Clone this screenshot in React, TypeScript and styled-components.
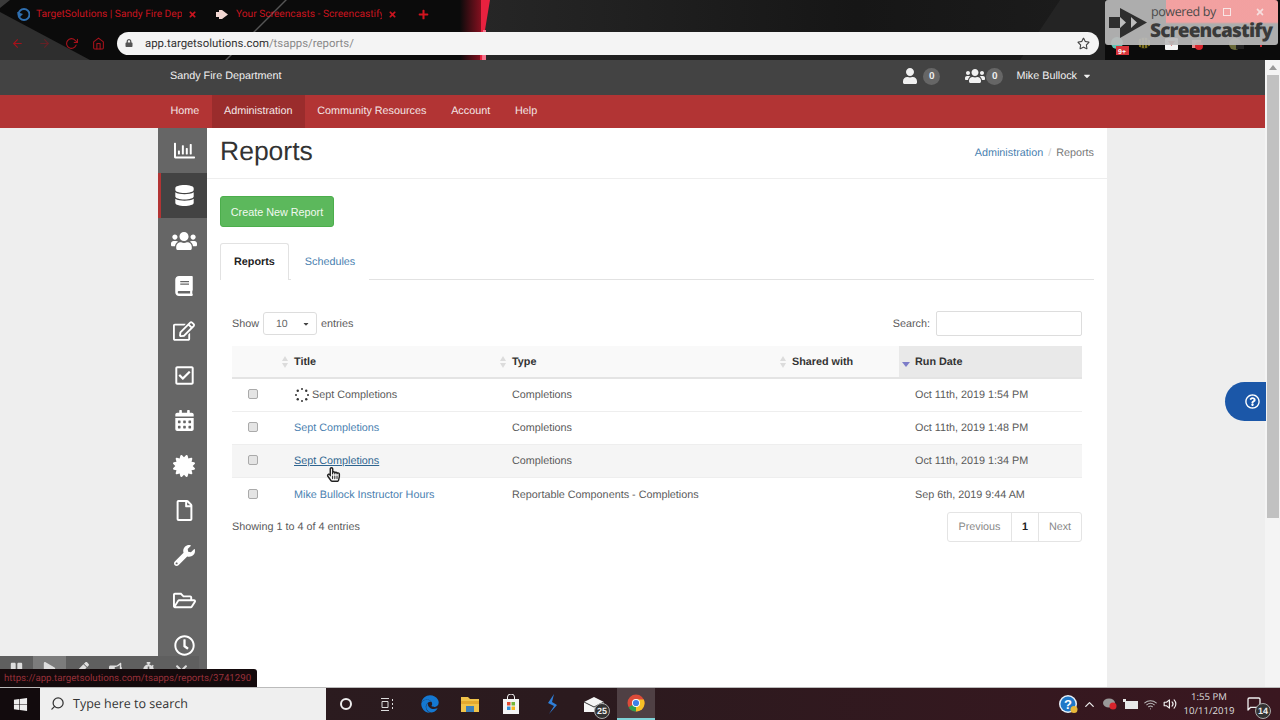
import React from "react";
import styled, { createGlobalStyle } from "styled-components";
import {
  FaBook,
  FaBullhorn,
  FaCalendarAlt,
  FaCaretDown,
  FaCertificate,
  FaChevronDown,
  FaDatabase,
  FaEdge,
  FaLock,
  FaPause,
  FaPen,
  FaPlay,
  FaPlus,
  FaRegChartBar,
  FaRegCheckSquare,
  FaRegClock,
  FaRegEdit,
  FaRegFile,
  FaRegFolderOpen,
  FaRegHandPointer,
  FaRegQuestionCircle,
  FaRegStar,
  FaStopwatch,
  FaTimes,
  FaUser,
  FaUsers,
  FaWindows,
  FaWrench,
} from "react-icons/fa";
import {
  FiArrowLeft,
  FiArrowRight,
  FiChevronUp,
  FiHome,
  FiMessageSquare,
  FiRotateCw,
  FiSearch,
  FiVolume2,
  FiWifi,
} from "react-icons/fi";

const Global = createGlobalStyle`
  html, body { margin: 0; padding: 0; background: #fff; }
  body {
    font-family: "Liberation Sans", Arial, sans-serif;
    font-size: 10.8px;
    color: #333;
    overflow: hidden;
    text-rendering: geometricPrecision;
  }
  * { box-sizing: border-box; }
`;

const Screen = styled.div`
  position: relative;
  width: 1280px;
  height: 720px;
  display: flex;
  flex-direction: column;
  overflow: hidden;
`;

/* browser chrome */
const Chrome = styled.div`
  position: relative;
  height: 60px;
  flex: none;
  background: #0b0b0b;
`;
const ChromeArt = styled.svg`
  position: absolute;
  inset: 0;
`;
const TabRow = styled.div`
  position: relative;
  height: 30px;
  display: flex;
  align-items: center;
  padding: 0 0 2px 17px;
`;
const Tab = styled.div<{ $w: number }>`
  width: ${(p) => p.$w}px;
  display: flex;
  align-items: center;
  gap: 6px;
  font-family: Roboto, sans-serif;
  font-size: 10.2px;
  color: #c9141f;
  white-space: nowrap;
`;
const TabTitle = styled.span`
  width: 146px;
  overflow: hidden;
`;
const NewTab = styled.div`
  color: #d2141f;
  font-size: 11px;
  display: flex;
  margin-left: 2px;
`;
const ToolRow = styled.div`
  position: relative;
  display: flex;
  align-items: center;
  height: 26px;
  padding-left: 11px;
`;
const NavIcons = styled.div`
  width: 106px;
  display: flex;
  align-items: center;
  gap: 14px;
  color: #a5121b;
  font-size: 13px;
`;
const FadedArrow = styled(FiArrowRight)`
  opacity: 0.45;
`;
const Omnibox = styled.div`
  width: 982px;
  height: 23px;
  background: #f4f4f4;
  border-radius: 12px;
  display: flex;
  align-items: center;
  padding: 0 9px 0 8px;
  font-family: Roboto, sans-serif;
  font-size: 11.4px;
  color: #333;
`;
const LockIcon = styled(FaLock)`
  font-size: 8px;
  color: #555;
  margin: 0 12px 0 0;
`;
const UrlPath = styled.span`
  color: #8a8a8a;
`;
const StarIcon = styled(FaRegStar)`
  margin-left: auto;
  font-size: 13px;
  color: #444;
`;
const CastifyBadge = styled.div`
  position: absolute;
  top: 0;
  left: 1105px;
  width: 173px;
  height: 45px;
  background: linear-gradient(rgba(246, 160, 160, 0.95) 0 22px, transparent 24px) 61px 0 / 112px 100% no-repeat,
    rgba(186, 186, 186, 0.93);
  border-radius: 3px;
  color: #333;
`;
const CastifyLogo = styled.svg`
  position: absolute;
  left: 4px;
  top: 7px;
`;
const CastifySmall = styled.div`
  position: absolute;
  left: 46px;
  top: 3px;
  font-family: "Open Sans", sans-serif;
  font-size: 12.5px;
  letter-spacing: -0.4px;
  color: #4a4a4a;
`;
const CastifyName = styled.div`
  position: absolute;
  left: 45px;
  top: 17px;
  font-family: "Open Sans", sans-serif;
  font-weight: 800;
  font-size: 19px;
  letter-spacing: -0.8px;
  line-height: 26px;
  color: #3a3a3a;
`;
const CastifyRestore = styled.span`
  position: absolute;
  left: 118px;
  top: 8px;
  width: 8px;
  height: 8px;
  border: 1px solid #f8e6e6;
`;
const CastifyClose = styled(FaTimes)`
  position: absolute;
  left: 150px;
  top: 7px;
  font-size: 10px;
  color: #f6dede;
`;
const ExtIcons = styled.svg`
  position: absolute;
  left: 1105px;
  top: 34px;
`;

/* page */
const PageRow = styled.div`
  flex: 1;
  min-height: 0;
  display: flex;
`;
const Page = styled.div`
  flex: 1;
  min-width: 0;
  display: flex;
  flex-direction: column;
  background: #eee;
`;
const TopBar = styled.div`
  height: 35px;
  flex: none;
  background: #434343;
  color: #f0f0f0;
  display: flex;
  align-items: center;
  padding: 0 173px 3px 170px;
`;
const TopRight = styled.div`
  margin-left: auto;
  display: flex;
  align-items: center;
`;
const TopIcon = styled.span<{ $size: number; $left: number; $right: number }>`
  display: flex;
  font-size: ${(p) => p.$size}px;
  margin: 0 ${(p) => p.$right}px 0 ${(p) => p.$left}px;
`;
const CountBadge = styled.span`
  width: 17px;
  height: 17px;
  border-radius: 50%;
  background: #666;
  color: #eee;
  font-size: 10px;
  font-weight: 700;
  display: flex;
  align-items: center;
  justify-content: center;
`;
const UserName = styled.span`
  margin-left: 13px;
`;
const UserCaret = styled(FaCaretDown)`
  margin-left: 5px;
  font-size: 10px;
`;
const NavBar = styled.nav`
  height: 33px;
  flex: none;
  background: #b23434;
  display: flex;
  padding-left: 158px;
`;
const NavItem = styled.a<{ $active?: boolean }>`
  display: flex;
  align-items: center;
  padding: 0 12.4px 2px;
  color: #f4e6e6;
  background: ${(p) => (p.$active ? "#9a2c2c" : "transparent")};
`;
const Body = styled.div`
  flex: 1;
  min-height: 0;
  display: flex;
  padding: 0 158px;
`;
const Sidebar = styled.aside`
  width: 49px;
  flex: none;
  background: #666;
  display: flex;
  flex-direction: column;
`;
const SideItem = styled.div<{ $active?: boolean; $size: number }>`
  height: 45px;
  flex: none;
  display: flex;
  align-items: center;
  justify-content: center;
  color: #fff;
  font-size: ${(p) => p.$size}px;
  background: ${(p) => (p.$active ? "#434343" : "transparent")};
  border-left: 3px solid ${(p) => (p.$active ? "#b23434" : "transparent")};
`;
const Content = styled.main`
  position: relative;
  flex: 1;
  min-width: 0;
  background: #fff;
`;
const PageHead = styled.header`
  height: 51px;
  display: flex;
  align-items: center;
  justify-content: space-between;
  padding: 0 13px 4px 13px;
  border-bottom: 1px solid #eee;
`;
const H1 = styled.h1`
  margin: 0;
  font-size: 26.5px;
  font-weight: 400;
  color: #333;
`;
const Crumbs = styled.div`
  display: flex;
  gap: 5px;
  margin-top: 4px;
  color: #777;
`;
const CrumbLink = styled.a`
  color: #4a7fb0;
`;
const Sep = styled.span`
  color: #ccc;
`;
const Inner = styled.div`
  padding: 17px 13px 0;
`;
const GreenButton = styled.button`
  display: block;
  width: 114px;
  height: 31px;
  padding: 0;
  border: 1px solid #4cae4c;
  border-radius: 3px;
  background: #5cb85c;
  color: #f2f8f0;
  font: 10.8px "Liberation Sans", Arial, sans-serif;
`;
const Tabs = styled.div`
  display: flex;
  margin-top: 16px;
  height: 37px;
  border-bottom: 1px solid #e2e2e2;
`;
const TabLink = styled.a<{ $active?: boolean }>`
  height: 37px;
  display: flex;
  align-items: center;
  padding: 0 13px;
  color: ${(p) => (p.$active ? "#222" : "#4a7fb0")};
  font-weight: ${(p) => (p.$active ? 700 : 400)};
  background: #fff;
  border: 1px solid ${(p) => (p.$active ? "#e2e2e2" : "transparent")};
  border-bottom: none;
  border-radius: 3px 3px 0 0;
  margin-right: 2px;
`;
const TableBox = styled.div`
  padding: 31px 12px 0;
  color: #5a5a5a;
`;
const Controls = styled.div`
  height: 25px;
  display: flex;
  align-items: center;
  justify-content: space-between;
`;
const ControlSide = styled.div`
  display: flex;
  align-items: center;
  gap: 4px;
`;
const FakeSelect = styled.div`
  width: 54px;
  height: 23px;
  border: 1px solid #ddd;
  border-radius: 3px;
  display: flex;
  align-items: center;
  justify-content: space-between;
  padding: 0 6px 0 12px;
  font-size: 10.5px;
  color: #666;
`;
const SelectCaret = styled(FaCaretDown)`
  font-size: 8px;
  color: #444;
`;
const SearchBox = styled.div`
  width: 146px;
  height: 25px;
  margin-left: 2px;
  border: 1px solid #ddd;
  border-radius: 2px;
`;
const Table = styled.table`
  width: 850px;
  margin-top: 10px;
  border-collapse: collapse;
  table-layout: fixed;
  tbody tr:last-child td {
    border-bottom: none;
  }
`;
const Th = styled.th<{ $w: number; $sorted?: boolean }>`
  position: relative;
  width: ${(p) => p.$w}px;
  height: 32px;
  padding: 0 0 0 16px;
  text-align: left;
  font-weight: 700;
  color: #333;
  background: ${(p) => (p.$sorted ? "#e9e9e9" : "#f9f9f9")};
  border-bottom: 2px solid #e4e4e4;
`;
const SortMark = styled.svg`
  position: absolute;
  left: 3px;
  top: 10px;
`;
const Row = styled.tr<{ $hover?: boolean }>`
  background: ${(p) => (p.$hover ? "#f5f5f5" : "#fff")};
`;
const Td = styled.td`
  height: 33.3px;
  padding: 0 0 0 16px;
  border-bottom: 1px solid #eee;
  color: #5a5a5a;
  white-space: nowrap;
`;
const BoxCell = styled.td`
  height: 33.3px;
  padding: 0 0 2px 16px;
  border-bottom: 1px solid #eee;
`;
const Check = styled.span`
  display: block;
  width: 10px;
  height: 10px;
  border: 1px solid #aaa;
  border-radius: 2px;
  background: #e4e4e4;
`;
const RowLink = styled.a<{ $hover?: boolean }>`
  color: ${(p) => (p.$hover ? "#2f6590" : "#4a7fb0")};
  text-decoration: ${(p) => (p.$hover ? "underline" : "none")};
`;
const Running = styled.span`
  display: flex;
  align-items: center;
  gap: 2px;
`;
const Footer = styled.div`
  display: flex;
  justify-content: space-between;
  align-items: center;
  margin-top: 1px;
`;
const Pager = styled.div`
  height: 30px;
  display: flex;
  border: 1px solid #e4e4e4;
  border-radius: 3px;
`;
const PageCell = styled.span<{ $w: number; $current?: boolean }>`
  width: ${(p) => p.$w}px;
  display: flex;
  align-items: center;
  justify-content: center;
  color: ${(p) => (p.$current ? "#222" : "#888")};
  font-weight: ${(p) => (p.$current ? 700 : 400)};
  & + & {
    border-left: 1px solid #e4e4e4;
  }
`;
const HandCursor = styled(FaRegHandPointer)`
  position: absolute;
  left: 119px;
  top: 339px;
  font-size: 15px;
  color: #222;
`;
const Scrollbar = styled.div`
  position: relative;
  width: 15px;
  flex: none;
  background: #f4f4f4;
  padding: 15px 1px 0 2px;
`;
const ScrollArrow = styled.span`
  position: absolute;
  top: 5px;
  left: 4px;
  width: 0;
  height: 0;
  border: 4px solid transparent;
  border-top: none;
  border-bottom: 5px solid #999;
`;
const ScrollThumb = styled.div`
  height: 443px;
  background: #c1c1c1;
`;
const HelpTab = styled.div`
  position: absolute;
  left: 1225px;
  top: 382px;
  width: 41px;
  height: 39px;
  border-radius: 20px 0 0 20px;
  background: #1b57a8;
  color: #fff;
  display: flex;
  align-items: center;
  justify-content: center;
  font-size: 15px;
  padding-left: 13px;
`;
const RecorderBar = styled.div`
  position: absolute;
  left: 0;
  top: 656px;
  width: 199px;
  height: 31px;
  background: #5f5f5f;
  display: flex;
  color: #ddd;
  font-size: 13px;
`;
const RecorderBtn = styled.span<{ $on?: boolean }>`
  width: 33px;
  height: 100%;
  background: ${(p) => (p.$on ? "#7c7c7c" : "transparent")};
  display: flex;
  justify-content: center;
  padding-top: 6px;
`;
const LinkHint = styled.div`
  position: absolute;
  left: 0;
  top: 669px;
  width: 257px;
  height: 18px;
  padding-left: 4px;
  display: flex;
  align-items: center;
  background: #140a0c;
  color: #98303a;
  border-radius: 0 3px 0 0;
  font-family: Roboto, sans-serif;
  font-size: 9.7px;
  white-space: nowrap;
`;

/* windows taskbar */
const Taskbar = styled.footer`
  height: 33px;
  flex: none;
  display: flex;
  align-items: center;
  background: linear-gradient(90deg, #2b1c20 0, #2b1a1e 45%, #3a1720 100%);
  border-top: 1px solid #bbb;
  color: #eee;
`;
const StartBtn = styled.div`
  width: 40px;
  height: 100%;
  background: #120b0d;
  display: flex;
  align-items: center;
  justify-content: center;
  font-size: 15px;
`;
const SearchField = styled.div`
  width: 286px;
  height: 100%;
  background: #efefef;
  color: #333;
  display: flex;
  align-items: center;
  padding: 0 0 2px 10px;
  gap: 8px;
  font-family: "Open Sans", sans-serif;
  font-size: 12.5px;
`;
const FlippedSearch = styled(FiSearch)`
  transform: scaleX(-1);
`;
const TaskSlot = styled.div<{ $w: number; $active?: boolean }>`
  position: relative;
  width: ${(p) => p.$w}px;
  height: 100%;
  display: flex;
  align-items: center;
  justify-content: center;
  background: ${(p) => (p.$active ? "#4f4044" : "transparent")};
  border-bottom: ${(p) => (p.$active ? "2px solid #7fd3d8" : "none")};
`;
const Cortana = styled.span`
  width: 12px;
  height: 12px;
  border: 2px solid #eee;
  border-radius: 50%;
`;
const MiniBadge = styled.span<{ $right: number }>`
  position: absolute;
  right: ${(p) => p.$right}px;
  bottom: 1px;
  width: 16px;
  height: 16px;
  border-radius: 50%;
  background: #333;
  color: #eee;
  border: 1px solid #aaa;
  font-size: 9px;
  font-weight: 700;
  display: flex;
  align-items: center;
  justify-content: center;
`;
const Tray = styled.div`
  margin-left: auto;
  display: flex;
  align-items: center;
  height: 100%;
  font-size: 13px;
`;
const TrayIcon = styled.span<{ $w: number }>`
  width: ${(p) => p.$w}px;
  display: flex;
  justify-content: center;
`;
const Clock = styled.div`
  width: 58px;
  text-align: center;
  font-family: "Open Sans", sans-serif;
  font-size: 9.6px;
  line-height: 14px;
  color: #ddd;
`;
const Notify = styled.div`
  position: relative;
  width: 42px;
  height: 100%;
  display: flex;
  align-items: center;
  justify-content: center;
  padding-right: 10px;
  font-size: 16px;
`;

const sideIcons = [
  { Icon: FaRegChartBar, size: 21 },
  { Icon: FaDatabase, size: 21 },
  { Icon: FaUsers, size: 26 },
  { Icon: FaBook, size: 20 },
  { Icon: FaRegEdit, size: 22 },
  { Icon: FaRegCheckSquare, size: 21 },
  { Icon: FaCalendarAlt, size: 21 },
  { Icon: FaCertificate, size: 22 },
  { Icon: FaRegFile, size: 21 },
  { Icon: FaWrench, size: 21 },
  { Icon: FaRegFolderOpen, size: 23 },
  { Icon: FaRegClock, size: 21 },
];

const rows = [
  { title: "Sept Completions", type: "Completions", date: "Oct 11th, 2019 1:54 PM", running: true },
  { title: "Sept Completions", type: "Completions", date: "Oct 11th, 2019 1:48 PM" },
  { title: "Sept Completions", type: "Completions", date: "Oct 11th, 2019 1:34 PM", hover: true },
  { title: "Mike Bullock Instructor Hours", type: "Reportable Components - Completions", date: "Sep 6th, 2019 9:44 AM" },
];

const Sort = ({ sorted }: { sorted?: boolean }) => (
  <SortMark width="8" height="12" viewBox="0 0 8 12">
    {sorted ? (
      <path d="M0 6h8l-4 5z" fill="#7c7cc8" />
    ) : (
      <path d="M4 0l3 5H1zM4 12L1 7h6z" fill="#dcdcdc" />
    )}
  </SortMark>
);

const Spinner = () => (
  <svg width="16" height="16" viewBox="0 0 16 16">
    {[0, 45, 90, 135, 180, 225, 270, 315].map((a, i) => (
      <circle
        key={a}
        cx={8 + 6 * Math.sin((a * Math.PI) / 180)}
        cy={8 - 6 * Math.cos((a * Math.PI) / 180)}
        r={i % 2 ? 1.2 : 1}
        fill="#333"
      />
    ))}
  </svg>
);

const ChromeLogo = () => (
  <svg width="18" height="18" viewBox="0 0 18 18">
    <circle cx="9" cy="9" r="8.5" fill="#dd4b39" />
    <path d="M9 9L1.6 13.2A8.5 8.5 0 0 0 9 17.5z" fill="#2f9e4f" />
    <path d="M9 9v8.5A8.500 8.500 0 0 0 16.800 5.500H9z" fill="#f6c026" />
    <circle cx="9" cy="9" r="4" fill="#fff" />
    <circle cx="9" cy="9" r="3.1" fill="#3f80e8" />
  </svg>
);

const App: React.FC = () => {
  return (
    <Screen>
      <Global />
      <Chrome>
        <ChromeArt width="1280" height="60" viewBox="0 0 1280 60">
          <defs>
            <linearGradient id="glow" x1="0" x2="1" y1="0" y2="0">
              <stop offset="0" stopColor="#0b0b0b" />
              <stop offset="1" stopColor="#8a1020" />
            </linearGradient>
            <linearGradient id="rightSide" x1="0" x2="1" y1="0" y2="0">
              <stop offset="0" stopColor="#262626" />
              <stop offset="0.6" stopColor="#161616" />
              <stop offset="1" stopColor="#1c1c1c" />
            </linearGradient>
          </defs>
          <path d="M0 12L90 60H0z" fill="#2e2e2e" />
          <path d="M285 0L225 60h2L287 0z" fill="#555" />
          <rect x="460" y="0" width="22" height="60" fill="url(#glow)" />
          <rect x="484" y="0" width="620" height="60" fill="url(#rightSide)" />
          <path d="M1020 60l40-60h45v60z" fill="#242424" />
          <path d="M0 0h10L0 8z" fill="#3a3a3a" />
          <path d="M481 0h9l-5 30 1 30h-6l1-30z" fill="#e8213f" />
          <path d="M483 30h3v30h-4z" fill="#f4748c" />
        </ChromeArt>
        <TabRow>
          <Tab $w={198}>
            <svg width="13" height="13" viewBox="0 0 13 13">
              <circle cx="7" cy="6.5" r="5.5" fill="none" stroke="#2f6fb0" strokeWidth="2" />
              <path d="M0 4l6 2-4 4z" fill="#2f6fb0" />
            </svg>
            <TabTitle>TargetSolutions | Sandy Fire Department</TabTitle>
            <FaTimes size={9} />
          </Tab>
          <Tab $w={201}>
            <svg width="15" height="11" viewBox="0 0 13 11">
              <path d="M0 3h3V1h3l6 4.5L6 10H3V8H0z" fill="#f2d7d2" />
            </svg>
            <TabTitle>Your Screencasts - Screencastify</TabTitle>
            <FaTimes size={9} />
          </Tab>
          <NewTab>
            <FaPlus />
          </NewTab>
        </TabRow>
        <ToolRow>
          <NavIcons>
            <FiArrowLeft />
            <FadedArrow />
            <FiRotateCw />
            <FiHome />
          </NavIcons>
          <Omnibox>
            <LockIcon />
            app.targetsolutions.com<UrlPath>/tsapps/reports/</UrlPath>
            <StarIcon />
          </Omnibox>
        </ToolRow>
        <ExtIcons width="175" height="24" viewBox="0 0 175 24">
          <circle cx="12" cy="9" r="6" fill="#5fc4b4" />
          <rect x="11" y="12" width="13" height="9" fill="#d8343a" />
          <text x="13" y="19.500" fontSize="7" fontWeight="700" fill="#fff" fontFamily="Liberation Sans">9+</text>
          <circle cx="39" cy="9" r="6" fill="#2a2a10" />
          <path d="M35 5v8M38 4v10M41 4v10M44 6v6" stroke="#d4b82e" strokeWidth="1" />
          <rect x="60" y="4" width="13" height="12" rx="1" fill="#f4f4f4" />
          <path d="M63 7h7l-3.500 5z" fill="#c84a4a" />
          <rect x="87" y="6" width="9" height="8" fill="#e58a8a" />
          <circle cx="94" cy="12" r="4" fill="#d8242c" />
          <circle cx="130" cy="10" r="6" fill="#6b6b3a" />
          <rect x="131" y="9" width="8" height="6" fill="#222" />
          <rect x="155" y="11" width="2" height="2" fill="#c8242c" />
        </ExtIcons>
        <CastifyBadge>
          <CastifyLogo width="40" height="32" viewBox="0 0 40 32">
            <path d="M11 1l27 14.500L11 31z" fill="#2e2e2e" />
            <path d="M0 10h11v11H0z" fill="#2e2e2e" />
            <path d="M11 10l6 5.500-6 5.500zM22 10l6 5.500-6 5.500z" fill="#bdbdbd" />
          </CastifyLogo>
          <CastifySmall>powered by</CastifySmall>
          <CastifyName>Screencastify</CastifyName>
          <CastifyRestore />
          <CastifyClose />
        </CastifyBadge>
      </Chrome>

      <PageRow>
        <Page>
          <TopBar>
            Sandy Fire Department
            <TopRight>
              <TopIcon $size={16} $left={0} $right={5}>
                <FaUser />
              </TopIcon>
              <CountBadge>0</CountBadge>
              <TopIcon $size={20} $left={25} $right={1}>
                <FaUsers />
              </TopIcon>
              <CountBadge>0</CountBadge>
              <UserName>Mike Bullock</UserName>
              <UserCaret />
            </TopRight>
          </TopBar>
          <NavBar>
            <NavItem>Home</NavItem>
            <NavItem $active>Administration</NavItem>
            <NavItem>Community Resources</NavItem>
            <NavItem>Account</NavItem>
            <NavItem>Help</NavItem>
          </NavBar>
          <Body>
            <Sidebar>
              {sideIcons.map(({ Icon, size }, i) => (
                <SideItem key={i} $active={i === 1} $size={size}>
                  <Icon />
                </SideItem>
              ))}
            </Sidebar>
            <Content>
              <PageHead>
                <H1>Reports</H1>
                <Crumbs>
                  <CrumbLink>Administration</CrumbLink>
                  <Sep>/</Sep>
                  <span>Reports</span>
                </Crumbs>
              </PageHead>
              <Inner>
                <GreenButton>Create New Report</GreenButton>
                <Tabs>
                  <TabLink $active>Reports</TabLink>
                  <TabLink>Schedules</TabLink>
                </Tabs>
                <TableBox>
                  <Controls>
                    <ControlSide>
                      Show
                      <FakeSelect>
                        10
                        <SelectCaret />
                      </FakeSelect>
                      entries
                    </ControlSide>
                    <ControlSide>
                      Search:
                      <SearchBox />
                    </ControlSide>
                  </Controls>
                  <Table>
                    <thead>
                      <tr>
                        <Th $w={46} />
                        <Th $w={218}>
                          <Sort />
                          Title
                        </Th>
                        <Th $w={280}>
                          <Sort />
                          Type
                        </Th>
                        <Th $w={123}>
                          <Sort />
                          Shared with
                        </Th>
                        <Th $w={183} $sorted>
                          <Sort sorted />
                          Run Date
                        </Th>
                      </tr>
                    </thead>
                    <tbody>
                      {rows.map((r, i) => (
                        <Row key={i} $hover={r.hover}>
                          <BoxCell>
                            <Check />
                          </BoxCell>
                          <Td>
                            {r.running ? (
                              <Running>
                                <Spinner />
                                {r.title}
                              </Running>
                            ) : (
                              <RowLink $hover={r.hover}>{r.title}</RowLink>
                            )}
                          </Td>
                          <Td>{r.type}</Td>
                          <Td />
                          <Td>{r.date}</Td>
                        </Row>
                      ))}
                    </tbody>
                  </Table>
                  <Footer>
                    Showing 1 to 4 of 4 entries
                    <Pager>
                      <PageCell $w={63}>Previous</PageCell>
                      <PageCell $w={27} $current>
                        1
                      </PageCell>
                      <PageCell $w={43}>Next</PageCell>
                    </Pager>
                  </Footer>
                </TableBox>
              </Inner>
              <HandCursor />
            </Content>
          </Body>
        </Page>
        <Scrollbar>
          <ScrollArrow />
          <ScrollThumb />
        </Scrollbar>
      </PageRow>

      <HelpTab>
        <FaRegQuestionCircle />
      </HelpTab>
      <RecorderBar>
        <RecorderBtn>
          <FaPause />
        </RecorderBtn>
        <RecorderBtn $on>
          <FaPlay />
        </RecorderBtn>
        <RecorderBtn>
          <FaPen />
        </RecorderBtn>
        <RecorderBtn>
          <FaBullhorn />
        </RecorderBtn>
        <RecorderBtn>
          <FaStopwatch />
        </RecorderBtn>
        <RecorderBtn>
          <FaChevronDown />
        </RecorderBtn>
      </RecorderBar>
      <LinkHint>https://app.targetsolutions.com/tsapps/reports/3741290</LinkHint>

      <Taskbar>
        <StartBtn>
          <FaWindows />
        </StartBtn>
        <SearchField>
          <FlippedSearch size={15} />
          Type here to search
        </SearchField>
        <TaskSlot $w={40}>
          <Cortana />
        </TaskSlot>
        <TaskSlot $w={41}>
          <svg width="14" height="13" viewBox="0 0 14 13" fill="none" stroke="#ddd">
            <path d="M1 .5h8M2 3.500h6v6H2zM1 12.500h8M12.500 1v2M12.500 5v2M12.500 9v2" />
          </svg>
        </TaskSlot>
        <TaskSlot $w={45}>
          <FaEdge size={18} color="#1478d2" />
        </TaskSlot>
        <TaskSlot $w={36}>
          <svg width="18" height="16" viewBox="0 0 18 16">
            <path d="M0 1h7l2 2h9v13H0z" fill="#f0c34a" />
            <rect x="0" y="5" width="18" height="3" fill="#e3a92e" />
            <rect x="5" y="10" width="8" height="6" fill="#3b7fb8" />
          </svg>
        </TaskSlot>
        <TaskSlot $w={46}>
          <svg width="18" height="20" viewBox="0 0 18 20">
            <path d="M1 5h16v15H1z" fill="#f5f5f5" />
            <path d="M5.500 6V3a3.500 3 0 0 1 7 0v3" fill="none" stroke="#f5f5f5" />
            <rect x="5" y="8" width="3.500" height="3.500" fill="#e2492f" />
            <rect x="9.500" y="8" width="3.500" height="3.500" fill="#72b53a" />
            <rect x="5" y="12.500" width="3.500" height="3.500" fill="#2f8ed8" />
            <rect x="9.500" y="12.500" width="3.500" height="3.500" fill="#f6b71e" />
          </svg>
        </TaskSlot>
        <TaskSlot $w={36}>
          <svg width="12" height="20" viewBox="0 0 12 20">
            <path d="M8 0L2 9l6 3-5 8 8-9-5-3z" fill="#2f7fd8" />
          </svg>
        </TaskSlot>
        <TaskSlot $w={47}>
          <svg width="20" height="15" viewBox="0 0 20 15">
            <path d="M0 5l10-5 10 5v10H0z" fill="#f5f5f5" />
            <path d="M0 5l10 5 10-5" fill="none" stroke="#333" />
          </svg>
          <MiniBadge $right={7}>25</MiniBadge>
        </TaskSlot>
        <TaskSlot $w={38} $active>
          <ChromeLogo />
        </TaskSlot>
        <Tray>
          <TrayIcon $w={23}>
            <svg width="20" height="20" viewBox="0 0 20 20">
              <circle cx="10" cy="10" r="9" fill="#e8f0f8" />
              <circle cx="10" cy="10" r="7.500" fill="#1f78c8" />
              <text x="10" y="14.500" textAnchor="middle" fontSize="13" fontWeight="700" fill="#fff" fontFamily="Liberation Sans">?</text>
              <circle cx="16" cy="15.500" r="3.500" fill="#e8b83a" />
            </svg>
          </TrayIcon>
          <TrayIcon $w={21}>
            <FiChevronUp size={15} />
          </TrayIcon>
          <TrayIcon $w={20}>
            <svg width="14" height="12" viewBox="0 0 14 12">
              <ellipse cx="6" cy="5" rx="6" ry="4.500" fill="#999" />
              <circle cx="10" cy="8" r="3.500" fill="#d8242c" />
            </svg>
          </TrayIcon>
          <TrayIcon $w={20}>
            <svg width="15" height="10" viewBox="0 0 15 10">
              <rect x="2" y="2" width="13" height="8" fill="#e8e8e8" />
              <rect x="0" y="0" width="3" height="3" fill="#e8e8e8" />
            </svg>
          </TrayIcon>
          <TrayIcon $w={20}>
            <FiWifi size={13} color="#bbb" />
          </TrayIcon>
          <TrayIcon $w={20}>
            <FiVolume2 size={14} />
          </TrayIcon>
          <Clock>
            1:55 PM
            <br />
            10/11/2019
          </Clock>
          <Notify>
            <FiMessageSquare />
            <MiniBadge $right={9}>14</MiniBadge>
          </Notify>
        </Tray>
      </Taskbar>
    </Screen>
  );
};

export default App;
